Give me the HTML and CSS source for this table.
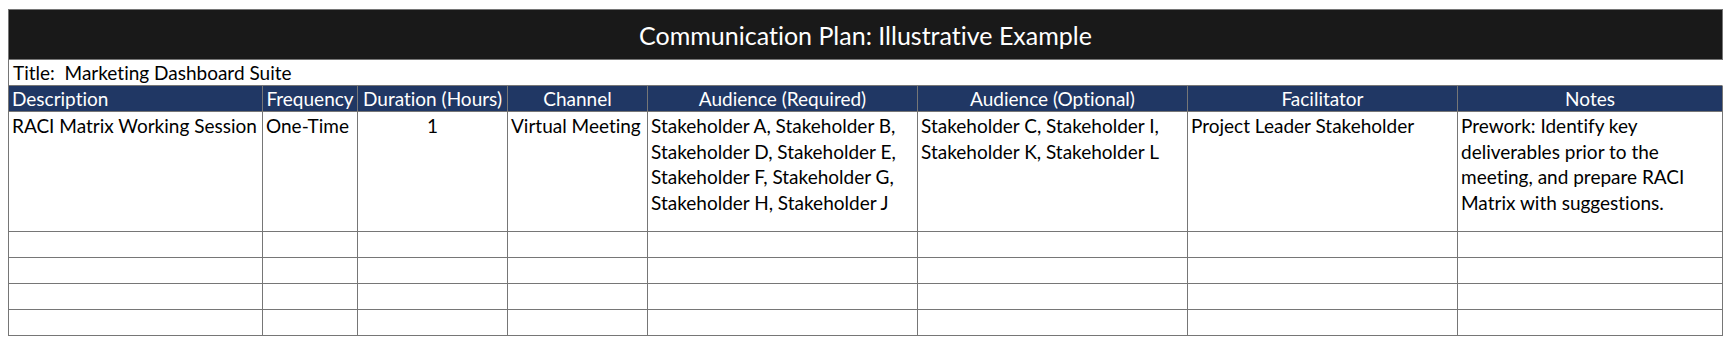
FILE: index.html
```html
<!DOCTYPE html>
<html lang="en">
<head>
<meta charset="utf-8">
<title>Communication Plan: Illustrative Example</title>
<link rel="stylesheet" href="styles.css">
</head>
<body>
<div class="sheet">
  <div class="banner">Communication Plan: Illustrative Example</div>
  <div class="subtitle">Title:&nbsp; Marketing Dashboard Suite</div>

  <div class="hd left">Description</div>
  <div class="hd">Frequency</div>
  <div class="hd">Duration (Hours)</div>
  <div class="hd">Channel</div>
  <div class="hd">Audience (Required)</div>
  <div class="hd">Audience (Optional)</div>
  <div class="hd">Facilitator</div>
  <div class="hd">Notes</div>

  <div class="cell data">RACI Matrix Working Session</div>
  <div class="cell data">One-Time</div>
  <div class="cell data center">1</div>
  <div class="cell data">Virtual Meeting</div>
  <div class="cell data">Stakeholder A, Stakeholder B,<br>Stakeholder D, Stakeholder E,<br>Stakeholder F, Stakeholder G,<br>Stakeholder H, Stakeholder J</div>
  <div class="cell data">Stakeholder C, Stakeholder I,<br>Stakeholder K, Stakeholder L</div>
  <div class="cell data">Project Leader Stakeholder</div>
  <div class="cell data">Prework: Identify key<br>deliverables prior to the<br>meeting, and prepare RACI<br>Matrix with suggestions.</div>

  <div class="cell"></div><div class="cell"></div><div class="cell"></div><div class="cell"></div><div class="cell"></div><div class="cell"></div><div class="cell"></div><div class="cell"></div>
  <div class="cell"></div><div class="cell"></div><div class="cell"></div><div class="cell"></div><div class="cell"></div><div class="cell"></div><div class="cell"></div><div class="cell"></div>
  <div class="cell"></div><div class="cell"></div><div class="cell"></div><div class="cell"></div><div class="cell"></div><div class="cell"></div><div class="cell"></div><div class="cell"></div>
  <div class="cell"></div><div class="cell"></div><div class="cell"></div><div class="cell"></div><div class="cell"></div><div class="cell"></div><div class="cell"></div><div class="cell"></div>
</div>
</body>
</html>
```

FILE: styles.css
```css
html, body {
  margin: 0;
  padding: 0;
  background: #ffffff;
}

body {
  padding: 9px 0 0 8px;
  font-family: Lato, "Liberation Sans", sans-serif;
  font-size: 19px;
  font-variant-ligatures: none;
  color: #000000;
}

.sheet {
  display: grid;
  grid-template-columns: 254px 95px 150px 140px 270px 270px 270px 265px;
  grid-template-rows: 50px 26px 26px 120px 26px 26px 26px 26px;
  width: max-content;
  border-left: 1px solid #767676;
  border-top: 1px solid #767676;
}

.sheet > div {
  box-sizing: border-box;
  border-right: 1px solid #767676;
  border-bottom: 1px solid #767676;
  white-space: nowrap;
  overflow: hidden;
}

.banner {
  grid-column: 1 / -1;
  background: #191919;
  color: #ffffff;
  font-size: 25px;
  display: flex;
  align-items: center;
  justify-content: center;
}

.subtitle {
  grid-column: 1 / -1;
  border-right-color: transparent !important;
  padding: 0 4px;
  line-height: 25px;
}

.hd {
  background: #203764;
  color: #ffffff;
  text-align: center;
  line-height: 25px;
  padding: 0 3px;
}

.hd.left {
  text-align: left;
}

.data {
  padding: 1px 3px 0;
  line-height: 25.7px;
}

.center {
  text-align: center;
}
```
